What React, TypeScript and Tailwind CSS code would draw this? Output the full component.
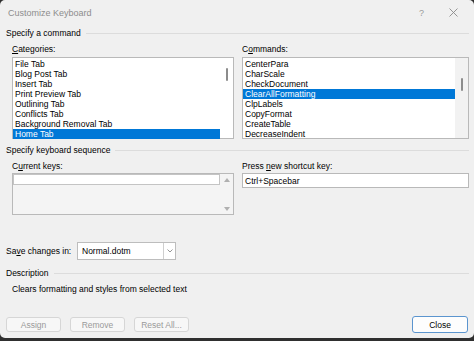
const categories = [
  'File Tab',
  'Blog Post Tab',
  'Insert Tab',
  'Print Preview Tab',
  'Outlining Tab',
  'Conflicts Tab',
  'Background Removal Tab',
  'Home Tab',
]

const commands = [
  'CenterPara',
  'CharScale',
  'CheckDocument',
  'ClearAllFormatting',
  'ClpLabels',
  'CopyFormat',
  'CreateTable',
  'DecreaseIndent',
]

function GroupHeader({ title, className = '' }: { title: string; className?: string }) {
  return (
    <div className={`flex items-center gap-[5px] h-[10px] pr-[5px] ${className}`}>
      <span className="text-black whitespace-nowrap">{title}</span>
      <div className="flex-1 h-px bg-[#dcdcdc]" />
    </div>
  )
}

function ListBox({
  items,
  selected,
  thumbTop,
  track,
}: {
  items: string[]
  selected: string
  thumbTop: number
  track?: boolean
}) {
  return (
    <div className="flex h-[82px] border border-[#b9b9b9] bg-white">
      <div className="flex-1 flex flex-col pt-px">
        {items.map((item) => (
          <div
            key={item}
            className={`h-[10px] leading-[10px] pl-[2px] whitespace-nowrap ${
              item === selected ? 'bg-[#0078d7] text-white' : 'text-black'
            }`}
          >
            {item}
          </div>
        ))}
      </div>
      {/* thin scrollbar */}
      <div className={`w-[13px] flex flex-col items-center ${track ? 'bg-[#f2f2f2]' : ''}`}>
        <div className="w-[2px] h-[13px] rounded-full bg-[#8c8c8c]" style={{ marginTop: thumbTop }} />
      </div>
    </div>
  )
}

function Btn({ label }: { label: string }) {
  return (
    <div className="w-[55px] h-[15px] flex items-center justify-center rounded-[3px] border border-[#d6d6d6] bg-[#f7f7f7] text-[#9a9a9a]">
      {label}
    </div>
  )
}

export default function App() {
  return (
    <div
      className="w-[474px] h-[341px] bg-[#2f2f2f] text-[8.5px] leading-[10px]"
      style={{ fontFamily: '"Liberation Sans", Arial, sans-serif' }}
    >
      <div className="h-[338px] bg-[#f0f0f0] rounded-[5px] flex flex-col">
        {/* Title bar */}
        <div className="h-[25px] flex items-center pl-[8px]">
          <span className="text-[9px] text-[#8d8d8d]">Customize Keyboard</span>
          <span className="ml-auto text-[9px] text-[#9a9a9a]">?</span>
          <svg width="9" height="9" viewBox="0 0 9 9" className="ml-[25px] mr-[16px]">
            <path d="M0.5 0.5 L8.5 8.5 M8.5 0.5 L0.5 8.5" stroke="#8a8a8a" strokeWidth="0.9" />
          </svg>
        </div>

        <div className="flex flex-col pl-[6px] flex-1">
          <GroupHeader title="Specify a command" className="mt-[3px]" />

          <div className="flex gap-[8px] pl-[6px] pr-[5px] mt-[6px]">
            <div className="w-[222px] flex flex-col">
              <div className="h-[10px]">
                <span className="underline">C</span>ategories:
              </div>
              <div className="mt-[3px]">
                <ListBox items={categories} selected="Home Tab" thumbTop={10} />
              </div>
            </div>
            <div className="flex-1 flex flex-col">
              <div className="h-[10px]">
                C<span className="underline">o</span>mmands:
              </div>
              <div className="mt-[3px]">
                <ListBox items={commands} selected="ClearAllFormatting" thumbTop={20} track />
              </div>
            </div>
          </div>

          <GroupHeader title="Specify keyboard sequence" className="mt-[6px]" />

          <div className="flex gap-[8px] pl-[6px] pr-[5px] mt-[6px]">
            <div className="w-[222px] flex flex-col">
              <div className="h-[10px]">
                C<span className="underline">u</span>rrent keys:
              </div>
              <div className="mt-[2px] h-[42px] border border-[#b9b9b9] bg-[#f4f4f4] flex">
                <div className="flex-1">
                  <div className="h-[11px] bg-white border border-[#c4c4c4]" />
                </div>
                <div className="w-[13px] flex flex-col items-center justify-between pt-[4px] pb-[3px] text-[#a8a8a8]">
                  <svg width="6" height="4" viewBox="0 0 6 4">
                    <path d="M3 0 L6 4 L0 4 Z" fill="#b0b0b0" />
                  </svg>
                  <svg width="6" height="4" viewBox="0 0 6 4">
                    <path d="M0 0 L6 0 L3 4 Z" fill="#b0b0b0" />
                  </svg>
                </div>
              </div>
            </div>
            <div className="flex-1 flex flex-col">
              <div className="h-[10px]">
                Press <span className="underline">n</span>ew shortcut key:
              </div>
              <div className="mt-[2px] h-[15px] border border-[#b9b9b9] bg-white flex items-center pl-[2px]">
                Ctrl+Spacebar
              </div>
            </div>
          </div>

          {/* Save changes in */}
          <div className="flex items-center mt-[27px] h-[18px]">
            <span className="w-[71px]">
              Sa<span className="underline">v</span>e changes in:
            </span>
            <div className="w-[99px] h-[18px] border border-[#bdbdbd] bg-white flex">
              <span className="flex-1 flex items-center pl-[4px]">Normal.dotm</span>
              <div className="w-[12px] border-l border-[#cfcfcf] flex items-center justify-center">
                <svg width="6" height="4" viewBox="0 0 6 4">
                  <path d="M0.5 0.5 L3 3 L5.5 0.5" stroke="#7a7a7a" strokeWidth="0.8" fill="none" />
                </svg>
              </div>
            </div>
          </div>

          <GroupHeader title="Description" className="mt-[8px]" />
          <div className="pl-[6px] mt-[6px] h-[10px]">Clears formatting and styles from selected text</div>

          {/* Buttons */}
          <div className="flex items-center gap-[9px] mt-auto mb-[5px] pr-[6px]">
            <Btn label="Assign" />
            <Btn label="Remove" />
            <Btn label="Reset All..." />
            <div className="ml-auto w-[56px] h-[17px] flex items-center justify-center rounded-[3px] border-[1.5px] border-[#5b95cf] bg-[#fdfdfd] text-black">
              Close
            </div>
          </div>
        </div>
      </div>
    </div>
  )
}
